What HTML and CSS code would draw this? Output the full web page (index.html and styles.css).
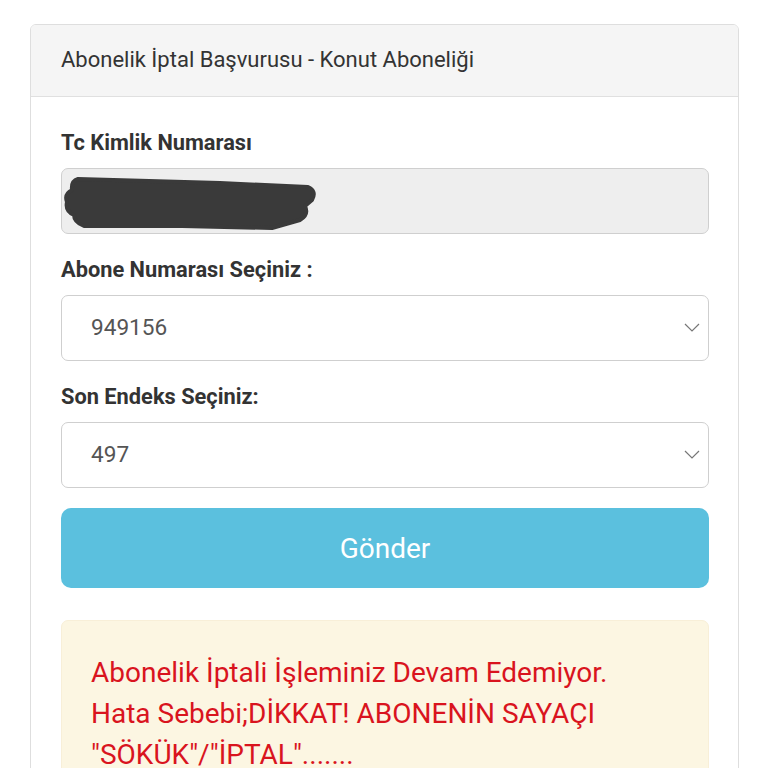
FILE: index.html
```html
<!DOCTYPE html>
<html lang="tr">
<head>
<meta charset="utf-8">
<title>Abonelik İptal Başvurusu</title>
<link rel="stylesheet" href="styles.css">
</head>
<body>
<div class="card">
  <div class="card-header">Abonelik İptal Başvurusu - Konut Aboneliği</div>
  <div class="card-body">
    <div class="field">
      <label class="label">Tc Kimlik Numarası</label>
      <div class="control readonly">
        <svg class="redact" width="260" height="62" viewBox="0 0 260 62" aria-hidden="true">
          <path d="M16,9 L158,13 L246,17 Q255,21 250,30 L243,36 Q247,45 238,50 L210,58 L120,56 L22,56 Q12,52 12,45 Q3,41 5,32 Q2,24 10,20 Q9,11 16,9 Z" fill="#3a3a3a" stroke="#3a3a3a" stroke-width="4" stroke-linejoin="round"/>
        </svg>
      </div>
    </div>
    <div class="field">
      <label class="label">Abone Numarası Seçiniz :</label>
      <div class="control select">
        <span class="value">949156</span>
        <svg class="chev" width="16" height="9" viewBox="0 0 16 9"><path d="M1 1 L8 8 L15 1" fill="none" stroke="#777" stroke-width="1.2"/></svg>
      </div>
    </div>
    <div class="field">
      <label class="label">Son Endeks Seçiniz:</label>
      <div class="control select">
        <span class="value">497</span>
        <svg class="chev" width="16" height="9" viewBox="0 0 16 9"><path d="M1 1 L8 8 L15 1" fill="none" stroke="#777" stroke-width="1.2"/></svg>
      </div>
    </div>
    <button class="btn" type="button">Gönder</button>
    <div class="alert">Abonelik İptali İşleminiz Devam Edemiyor. Hata Sebebi;DİKKAT! ABONENİN SAYAÇI "SÖKÜK"/"İPTAL".......</div>
  </div>
</div>
</body>
</html>
```
FILE: styles.css
```css
* { box-sizing: border-box; }
html, body { margin: 0; padding: 0; background: #fff; }
body {
  font-family: Roboto, "Liberation Sans", sans-serif;
  color: #333;
  padding: 24px 29px 0 30px;
}
.card {
  border: 1px solid #dedede;
  border-radius: 6px;
  background: #fff;
  overflow: hidden;
  height: 760px;
}
.card-header {
  height: 72px;
  background: #f5f5f5;
  border-bottom: 1px solid #e0e0e0;
  padding: 0 30px 3px;
  display: flex;
  align-items: center;
  font-size: 22px;
  color: #333;
}
.card-body {
  padding: 33px 29px 0 30px;
  display: flex;
  flex-direction: column;
}
.field {
  display: flex;
  flex-direction: column;
  margin-bottom: 23.5px;
}
.label {
  font-weight: 700;
  font-size: 21.8px;
  line-height: 26px;
  color: #333;
  margin-bottom: 12px;
}
.control {
  height: 65.5px;
  border: 1px solid #cfcfcf;
  border-radius: 7px;
  display: flex;
  align-items: center;
}
.readonly {
  background: #eee;
  padding-left: 0;
}
.redact { display: block; margin-top: 1px; }
.select {
  background: #fff;
  padding: 0 8px 0 29px;
  justify-content: space-between;
}
.value {
  font-size: 22.6px;
  color: #555;
}
.chev { display: block; }
.btn {
  margin-top: -3px;
  height: 80px;
  border: none;
  border-radius: 10px;
  background: #5bc0de;
  color: #fff;
  font-family: Roboto, "Liberation Sans", sans-serif;
  font-size: 28px;
}
.alert {
  margin-top: 32px;
  background: #fcf6e2;
  border: 1px solid #f8efd8;
  border-radius: 7px;
  padding: 31px 60px 30px 29px;
  color: #d9141e;
  font-size: 28px;
  line-height: 41px;
}
```
